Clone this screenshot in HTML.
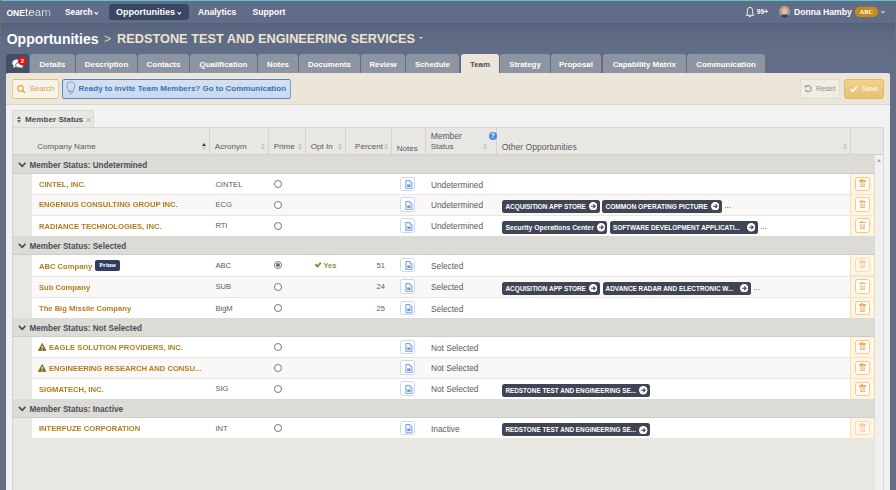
<!DOCTYPE html>
<html><head><meta charset="utf-8">
<style>
*{box-sizing:border-box;margin:0;padding:0}
html,body{width:896px;height:490px;overflow:hidden}
body{position:relative;background:#626e88;font-family:"Liberation Sans",sans-serif;color:#555}
.a{position:absolute}
#topline{left:1px;top:0;width:895px;height:1px;background:#58c8c6}
#nav{left:0;top:1px;width:896px;height:22px;background:#616d88}
#hdr{left:0;top:23px;width:896px;height:467px;background:linear-gradient(#55607a 0px,#5b6680 6px,#616c86 22px,#636e88 50px,#626e88 100px)}
#lstripe{left:0;top:1px;width:1px;height:489px;background:#6b6e74}
#rstripe{left:895px;top:1px;width:1px;height:489px;background:#6b6e74}
.navt{position:absolute;top:1.4px;height:22px;line-height:22px;font-weight:bold;font-size:8.6px;color:#fff;white-space:nowrap}
#opp{left:109px;top:3.6px;width:80px;height:16.2px;background:#3a4762;border-radius:3px}
.title{position:absolute;top:28.8px;font-weight:bold;color:#fff;white-space:nowrap;line-height:20px}
.tab{position:absolute;top:53.5px;height:19.5px;background:#8d95a2;border-radius:3px 3px 0 0;color:#fff;font-weight:bold;font-size:7.9px;text-align:center;line-height:21px;white-space:nowrap}
.tab.act{background:#ebe6d9;color:#4b4f5a}
#panel{left:6px;top:73px;width:884px;height:417px;background:#f2f2f2;border-radius:3px 3px 0 0}
#tool{left:6px;top:73px;width:884px;height:32px;background:#ebe6d9;border-bottom:1px solid #ddd6c6;border-radius:3px 3px 0 0}
.btn{position:absolute;top:79px;height:19.5px;border-radius:2.5px;font-size:8px;line-height:17.5px;white-space:nowrap;border:1px solid}
.chev{display:inline-block;width:2.7px;height:2.7px;border-right:1.1px solid #fff;border-bottom:1.1px solid #fff;transform:rotate(45deg);vertical-align:2px;margin-left:2.6px}

#chip{left:12.1px;top:110.4px;width:82.3px;height:17.5px;background:#e9e7e3;border:1px solid #dad8d2;border-bottom:none;border-radius:2.5px 2.5px 0 0;font-size:8.1px;font-weight:bold;color:#474a55;line-height:17px;padding-left:12px;white-space:nowrap}
#chip .x{position:absolute;left:73px;top:0.2px;color:#bdbbb6;font-size:9px;font-weight:bold}
.sorti{position:absolute;width:5px;height:8px}
.sorti:before,.sorti:after{content:"";position:absolute;left:0;border-left:2.5px solid transparent;border-right:2.5px solid transparent}
.sorti:before{top:0;border-bottom:3px solid #c9c7c2}
.sorti:after{top:4.5px;border-top:3px solid #c9c7c2}
.sorti.up:before{border-bottom-color:#3e3f44}
.sorti.dk:before{border-bottom-color:#67686c}.sorti.dk:after{border-top-color:#67686c}
#thead{left:12px;top:127.2px;width:872px;height:27.8px;background:#e9e7e3;border:1px solid #d9d7d1;border-bottom:1.2px solid #d3d1cb}
.th{position:absolute;font-size:8.1px;color:#565a66;white-space:nowrap;line-height:10px}
.vsep{position:absolute;top:127.2px;width:1px;height:27px;background:#d6d4ce}
#tbody{left:12.3px;top:155px;width:862.4px;height:335px;background:#e9e7e3;border-left:1px solid #d9d7d1}
#sbar{left:874.7px;top:155px;width:9.6px;height:335px;background:#f0f0f0;border-right:1px solid #d9d9d9}
#sup{left:877px;top:159px;border-left:2.5px solid transparent;border-right:2.5px solid transparent;border-bottom:3px solid #a6a6a6}
.grp{position:absolute;left:12.3px;width:862.4px;height:18px;background:#dddbd6;border-bottom:1px solid #cfcdc7;border-left:1px solid #d3d1cb}
.gchev{position:absolute;left:4.6px;top:6.9px;width:8.4px;height:6px}
.row>svg{position:absolute}
.gtxt{position:absolute;left:16.2px;top:1.9px;line-height:17.5px;font-size:8.15px;font-weight:bold;color:#4b4e58;white-space:nowrap}
.row{position:absolute;left:32.2px;width:842.5px;height:21.1px;background:#fff;border-bottom:1px solid #e8e6e1}
.row.alt{background:#f9f8f6}
.row>span{position:absolute}
.cn{left:6.4px;top:0.9px;line-height:20.5px;font-size:8.05px;transform:scaleX(0.945);transform-origin:0 0;font-weight:bold;color:#b27d1f;white-space:nowrap}
.acr,.st,.pct{top:0.6px;line-height:20.5px;font-size:8px;color:#5a5a5a;white-space:nowrap}
.acr{left:183.2px;font-size:7.6px}
.st{left:398.8px;font-size:8.3px}
.pct{right:489.8px;font-size:7.5px}
.radio{left:241.9px;top:6.1px;width:7.9px;height:7.9px;border:0.9px solid #767676;border-radius:50%;background:#fff}
.radio.on:after{content:"";position:absolute;left:1.05px;top:1.05px;width:4px;height:4px;border-radius:50%;background:#6a6a6a}
.yes{left:281.7px;top:0.6px;line-height:20.5px;font-size:7.5px;font-weight:bold;color:#7b9a3b;white-space:nowrap}
.chk{display:inline-block;width:3.6px;height:6.4px;border-right:2.1px solid #7b9a3b;border-bottom:2.1px solid #7b9a3b;transform:rotate(42deg);margin:0 4.2px 0 1.8px;vertical-align:0.5px}
.note{left:368.2px;top:2.5px;width:14.5px;height:14.5px;border:1px solid #c9d8ee;border-radius:2.5px;background:#fff}

.pill{top:5.1px;height:13px;background:#3f4555;border-radius:2.5px}
.pt{position:absolute;left:3px;top:0;line-height:13px;font-size:6.5px;font-weight:bold;color:#fff;white-space:nowrap}
.arr{position:absolute;right:2.4px;top:2.3px;width:8.4px;height:8.4px}
.more{top:12.4px;width:1.2px;height:1.2px;background:#7a7a7a;box-shadow:2.2px 0 0 #7a7a7a,4.4px 0 0 #7a7a7a}
.del{left:818px;top:0;width:24.5px;height:21.1px;background:#fdf4e4;border-left:1px solid #f5dfb6;border-right:1px solid #f5dcaa;border-bottom:1px solid #f6e4c4}
.delb{position:absolute;left:4.1px;top:2.7px;width:14.6px;height:14.6px;border:1.1px solid #f0c98c;border-radius:2.8px;background:#fffdf9}
.trash{position:absolute;left:3.6px;top:4.2px;width:5.2px;height:5.6px;background:linear-gradient(90deg,#f4c4b0,#f8ddd0 50%,#f4c4b0);border-bottom:1px solid #f2bf6c}
.trash:before{content:"";position:absolute;left:-0.9px;top:-1.6px;width:7px;height:1.4px;background:#f0b558}
.trash:after{content:"";position:absolute;left:1.6px;top:-2.6px;width:2px;height:1.2px;background:#f0b558}
.del.dis .delb{opacity:.55}
.warn{left:5.7px;top:6.2px;width:8.4px;height:8px}
.prime{left:62.9px;top:4.9px;width:24.8px;height:10.7px;background:#2f3e5e;border-radius:2px;color:#fff;font-family:"Liberation Serif",serif;font-weight:bold;font-size:6.3px;line-height:10.7px;text-align:center}
</style></head><body>
<div id="hdr" class="a"></div>
<div id="nav" class="a"></div>
<div id="topline" class="a"></div>
<div id="lstripe" class="a"></div>
<div id="rstripe" class="a"></div>
<div id="opp" class="a"></div>
<div class="navt" style="left:6.4px;font-size:8.6px;letter-spacing:0">ONE<span style="font-weight:normal;font-size:11.6px;letter-spacing:0;background:linear-gradient(90deg,#fff,#e4e7ee 50%,#b9bfcc);-webkit-background-clip:text;background-clip:text;color:transparent">team</span></div>
<div class="navt" style="left:65px;font-size:8.3px">Search<span class="chev"></span></div>
<div class="navt" style="left:116px;font-size:9px">Opportunities<span class="chev"></span></div>
<div class="navt" style="left:198px">Analytics</div>
<div class="navt" style="left:252.5px">Support</div>
<div class="navt" style="left:756.8px;font-size:6.6px;top:1.4px">99+</div>
<div class="navt" style="left:794px">Donna Hamby</div>

<div class="title" style="left:6.7px;font-size:14px">Opportunities</div>
<div class="title" style="left:104px;font-weight:normal;color:#d9d3c4;font-size:12px">&gt;</div>
<div class="title" style="left:117px;color:#ede4cf;font-size:12.75px">REDSTONE TEST AND ENGINEERING SERVICES</div>
<div class="a" style="left:419.2px;top:37px;border-left:2px solid transparent;border-right:2px solid transparent;border-top:2.2px solid #ddd6c6"></div>

<div class="tab" style="left:6px;width:23.4px;background:#434f69"></div>
<div class="tab" style="left:30px;width:45px">Details</div>
<div class="tab" style="left:76px;width:61px">Description</div>
<div class="tab" style="left:138px;width:51px">Contacts</div>
<div class="tab" style="left:190px;width:67px">Qualification</div>
<div class="tab" style="left:258px;width:40px">Notes</div>
<div class="tab" style="left:299px;width:61px">Documents</div>
<div class="tab" style="left:361px;width:44px">Review</div>
<div class="tab" style="left:406px;width:53px">Schedule</div>
<div class="tab act" style="left:461px;width:38px">Team</div>
<div class="tab" style="left:500px;width:50px">Strategy</div>
<div class="tab" style="left:551px;width:50px">Proposal</div>
<div class="tab" style="left:602.5px;width:83.5px">Capability Matrix</div>
<div class="tab" style="left:687px;width:78px">Communication</div>

<div id="panel" class="a"></div>
<div id="tool" class="a"></div>
<div class="btn" style="left:12px;width:47px;background:#f6f3ec;border-color:#ebbb68 #f0cf95 #ebbf70 #efcb8c;color:#e09d38;padding-left:16.6px;line-height:18.4px;font-size:7.9px">Search</div>
<div class="btn" style="left:62px;width:229px;background:linear-gradient(#d5e1f2,#cad9ee);border-color:#5283c5 #7ea2d5 #5283c5 #5a89c8;color:#3c70b6;padding-left:15.6px;font-weight:bold;line-height:18.3px;font-size:8px">Ready to invite Team Members? Go to Communication</div>
<div class="btn" style="left:799.6px;width:40.4px;background:#f0ece2;border-color:#e2ddd0;color:#8f8f8f;padding-left:15.5px;font-size:7.3px;line-height:18px">Reset</div>
<div class="btn" style="left:843.75px;width:40px;background:linear-gradient(#f0d28f,#e9c170);border-color:#e2b968;color:#fff;padding-left:17px;font-size:7.3px;line-height:18px">Save</div>


<div id="chip" class="a"><span class="sorti dk" style="left:4.2px;top:4.6px"></span>Member Status<span class="x">×</span></div>
<div id="thead" class="a"></div>
<div class="vsep" style="left:209px"></div>
<div class="vsep" style="left:268px"></div>
<div class="vsep" style="left:305px"></div>
<div class="vsep" style="left:345px"></div>
<div class="vsep" style="left:391px"></div>
<div class="vsep" style="left:425px"></div>
<div class="vsep" style="left:496px"></div>
<div class="vsep" style="left:850px"></div>
<div class="th" style="left:37.2px;top:141.5px">Company Name</div><span class="sorti up" style="left:201.5px;top:142.5px"></span>
<div class="th" style="left:214.8px;top:141.5px">Acronym</div><span class="sorti" style="left:261px;top:142.5px"></span>
<div class="th" style="left:273.7px;top:141.5px">Prime</div><span class="sorti" style="left:297.5px;top:142.5px"></span>
<div class="th" style="left:310.7px;top:141.5px">Opt In</div><span class="sorti" style="left:337.5px;top:142.5px"></span>
<div class="th" style="left:355px;top:141.5px">Percent</div><span class="sorti" style="left:383.5px;top:142.5px"></span>
<div class="th" style="left:396.7px;top:144px">Notes</div>
<div class="th" style="left:430.7px;top:131px;font-size:8.5px">Member</div>
<div class="th" style="left:430.7px;top:141.5px">Status</div><span class="sorti" style="left:483px;top:142.5px"></span>
<span class="a" style="left:488.7px;top:131.8px;width:8px;height:8px;border-radius:50%;background:#4a8ad6;color:#fff;font-size:6.5px;font-weight:bold;line-height:8px;text-align:center">?</span>
<div class="th" style="left:501.7px;top:141.5px;font-size:8.6px">Other Opportunities</div><span class="sorti" style="left:842.5px;top:142.5px"></span>
<div id="tbody" class="a"></div>
<div id="sbar" class="a"></div>
<div id="sup" class="a"></div>

<svg class="a" style="left:0;top:0" width="896" height="110" viewBox="0 0 896 110">
 <!-- chat bubbles -->
 <ellipse cx="16.8" cy="63" rx="4.6" ry="3.6" fill="#fff"/>
 <path d="M14 65.5 L13 68 L16.5 66.2 Z" fill="#fff"/>
 <ellipse cx="19.5" cy="65.2" rx="4" ry="2.6" fill="#fff" stroke="#434f69" stroke-width="0.8"/>
 <path d="M21.5 67 L23.2 68.3 L20 67.5 Z" fill="#fff"/>
 <circle cx="22.3" cy="61" r="4.4" fill="#f01010"/>
 <text x="22.3" y="63.3" font-size="6" font-weight="bold" fill="#fff" text-anchor="middle" font-family="Liberation Sans">2</text>
 <!-- search magnifier -->
 <circle cx="20.5" cy="88.4" r="2.8" fill="none" stroke="#e6a232" stroke-width="1.1"/>
 <path d="M22.3 90.2 L24.6 92.5" stroke="#e6a232" stroke-width="1.5" stroke-linecap="round"/>
 <!-- bulb -->
 <path d="M68.3 91.2 C68.3 88.5 66.9 87.8 66.9 85.6 A3.95 3.95 0 0 1 74.8 85.6 C74.8 87.8 73.4 88.5 73.4 91.2 Z" fill="none" stroke="#6a94cf" stroke-width="0.8"/>
 <path d="M68.5 91.6 H73.2 M69.2 93.4 H72.5" stroke="#6a94cf" stroke-width="0.8"/>
 <!-- reset -->
 <path d="M806.2 86.5 A3 3 0 1 1 805.4 89.8" fill="none" stroke="#8e8e8e" stroke-width="1.1"/>
 <path d="M804.6 85.4 L807.6 85.6 L805.4 88 Z" fill="#8e8e8e"/>
 <!-- save check -->
 <path d="M850.4 89.2 L852.6 91.3 L856.7 86.9" fill="none" stroke="#fff" stroke-width="1.7"/>
 <!-- bell -->
 <path d="M746.2 15.3 C747.6 14 747.4 12.5 747.4 10.5 C747.4 8.6 748.5 7.3 750 7.3 C751.5 7.3 752.6 8.6 752.6 10.5 C752.6 12.5 752.4 14 753.8 15.3 Z" fill="none" stroke="#fff" stroke-width="0.9"/>
 <path d="M749 16.4 H751" stroke="#fff" stroke-width="1"/>
 <!-- avatar -->
 <defs><clipPath id="av"><circle cx="784.7" cy="11.9" r="5.8"/></clipPath></defs>
 <g clip-path="url(#av)">
  <rect x="778" y="5" width="14" height="14" fill="#9c948f"/>
  <ellipse cx="784.4" cy="9.6" rx="4.2" ry="4.4" fill="#c9a06a"/>
  <ellipse cx="784.6" cy="11.6" rx="2.8" ry="3.3" fill="#dfbd9e"/>
  <ellipse cx="784.7" cy="18.2" rx="5.2" ry="3.6" fill="#2b3990"/>
 </g>
 <!-- ABC pill -->
 <rect x="854.8" y="6.8" width="23.3" height="10.2" rx="5.1" fill="#c38a1c"/>
 <text x="866.4" y="14.3" font-size="6.6" font-weight="bold" fill="#fff" text-anchor="middle" font-family="Liberation Serif">ABC</text>
 <path d="M881.2 11 L883 12.8 L884.8 11" fill="none" stroke="#fff" stroke-width="1"/>
</svg>
<div class="grp" style="top:155.00px;height:18.90px"><svg class="gchev" viewBox="0 0 8.4 6"><path d="M0.9 0.9 L4.2 4.3 L7.5 0.9" fill="none" stroke="#48494e" stroke-width="1.6"/></svg><span class="gtxt">Member Status: Undetermined</span></div>
<div class="row" style="top:174.00px;height:20.60px"><span class="cn">CINTEL, INC.</span><span class="acr">CINTEL</span><span class="radio"></span><span class="note"><svg style="position:absolute;left:3.6px;top:2.6px" width="8" height="9.4" viewBox="0 0 8 9.4"><path d="M0.9 0.6 H4.9 L7 2.7 V8.8 H0.9 Z" fill="#fff" stroke="#5a8ed4" stroke-width="0.9"/><path d="M4.8 0.7 V2.8 H6.9" fill="none" stroke="#7da6de" stroke-width="0.7"/><rect x="2.2" y="4.4" width="3.4" height="2.8" fill="#6f9ad8"/></svg></span><span class="st">Undetermined</span><span class="del"><span class="delb"><span class="trash"></span></span></span></div>
<div class="row alt" style="top:194.60px;height:21.20px"><span class="cn">ENGENIUS CONSULTING GROUP INC.</span><span class="acr">ECG</span><span class="radio"></span><span class="note"><svg style="position:absolute;left:3.6px;top:2.6px" width="8" height="9.4" viewBox="0 0 8 9.4"><path d="M0.9 0.6 H4.9 L7 2.7 V8.8 H0.9 Z" fill="#fff" stroke="#5a8ed4" stroke-width="0.9"/><path d="M4.8 0.7 V2.8 H6.9" fill="none" stroke="#7da6de" stroke-width="0.7"/><rect x="2.2" y="4.4" width="3.4" height="2.8" fill="#6f9ad8"/></svg></span><span class="st">Undetermined</span><span class="pill" style="left:470.2px;width:97.3px"><span class="pt" style="font-size:6.43px">ACQUISITION APP STORE</span><svg class="arr" viewBox="0 0 8.4 8.4"><circle cx="4.2" cy="4.2" r="4.2" fill="#fff"/><path d="M1.9 4.2 H6.1 M4.3 2.3 L6.2 4.2 L4.3 6.1" fill="none" stroke="#3f4555" stroke-width="1.1"/></svg></span><span class="pill" style="left:570.2px;width:119.5px"><span class="pt" style="font-size:6.61px">COMMON OPERATING PICTURE</span><svg class="arr" viewBox="0 0 8.4 8.4"><circle cx="4.2" cy="4.2" r="4.2" fill="#fff"/><path d="M1.9 4.2 H6.1 M4.3 2.3 L6.2 4.2 L4.3 6.1" fill="none" stroke="#3f4555" stroke-width="1.1"/></svg></span><span class="more" style="left:692.6px"></span><span class="del"><span class="delb"><span class="trash"></span></span></span></div>
<div class="row" style="top:215.80px;height:20.80px"><span class="cn">RADIANCE TECHNOLOGIES, INC.</span><span class="acr">RTI</span><span class="radio"></span><span class="note"><svg style="position:absolute;left:3.6px;top:2.6px" width="8" height="9.4" viewBox="0 0 8 9.4"><path d="M0.9 0.6 H4.9 L7 2.7 V8.8 H0.9 Z" fill="#fff" stroke="#5a8ed4" stroke-width="0.9"/><path d="M4.8 0.7 V2.8 H6.9" fill="none" stroke="#7da6de" stroke-width="0.7"/><rect x="2.2" y="4.4" width="3.4" height="2.8" fill="#6f9ad8"/></svg></span><span class="st">Undetermined</span><span class="pill" style="left:470.2px;width:105.0px"><span class="pt" style="font-size:6.83px">Security Operations Center</span><svg class="arr" viewBox="0 0 8.4 8.4"><circle cx="4.2" cy="4.2" r="4.2" fill="#fff"/><path d="M1.9 4.2 H6.1 M4.3 2.3 L6.2 4.2 L4.3 6.1" fill="none" stroke="#3f4555" stroke-width="1.1"/></svg></span><span class="pill" style="left:577.8px;width:147.6px"><span class="pt" style="font-size:6.4px">SOFTWARE DEVELOPMENT APPLICATI...</span><svg class="arr" viewBox="0 0 8.4 8.4"><circle cx="4.2" cy="4.2" r="4.2" fill="#fff"/><path d="M1.9 4.2 H6.1 M4.3 2.3 L6.2 4.2 L4.3 6.1" fill="none" stroke="#3f4555" stroke-width="1.1"/></svg></span><span class="more" style="left:729.1px"></span><span class="del"><span class="delb"><span class="trash"></span></span></span></div>
<div class="grp" style="top:236.10px;height:18.80px"><svg class="gchev" viewBox="0 0 8.4 6"><path d="M0.9 0.9 L4.2 4.3 L7.5 0.9" fill="none" stroke="#48494e" stroke-width="1.6"/></svg><span class="gtxt">Member Status: Selected</span></div>
<div class="row" style="top:255.00px;height:21.70px"><span class="cn" style="top:1.5px">ABC Company</span><span class="prime">Prime</span><span class="acr">ABC</span><span class="radio on"></span><span class="yes"><span class="chk"></span>Yes</span><span class="pct">51</span><span class="note"><svg style="position:absolute;left:3.6px;top:2.6px" width="8" height="9.4" viewBox="0 0 8 9.4"><path d="M0.9 0.6 H4.9 L7 2.7 V8.8 H0.9 Z" fill="#fff" stroke="#5a8ed4" stroke-width="0.9"/><path d="M4.8 0.7 V2.8 H6.9" fill="none" stroke="#7da6de" stroke-width="0.7"/><rect x="2.2" y="4.4" width="3.4" height="2.8" fill="#6f9ad8"/></svg></span><span class="st">Selected</span><span class="del dis"><span class="delb"><span class="trash"></span></span></span></div>
<div class="row alt" style="top:276.70px;height:21.40px"><span class="cn">Sub Company</span><span class="acr">SUB</span><span class="radio"></span><span class="pct">24</span><span class="note"><svg style="position:absolute;left:3.6px;top:2.6px" width="8" height="9.4" viewBox="0 0 8 9.4"><path d="M0.9 0.6 H4.9 L7 2.7 V8.8 H0.9 Z" fill="#fff" stroke="#5a8ed4" stroke-width="0.9"/><path d="M4.8 0.7 V2.8 H6.9" fill="none" stroke="#7da6de" stroke-width="0.7"/><rect x="2.2" y="4.4" width="3.4" height="2.8" fill="#6f9ad8"/></svg></span><span class="st">Selected</span><span class="pill" style="left:470.2px;width:97.3px"><span class="pt" style="font-size:6.43px">ACQUISITION APP STORE</span><svg class="arr" viewBox="0 0 8.4 8.4"><circle cx="4.2" cy="4.2" r="4.2" fill="#fff"/><path d="M1.9 4.2 H6.1 M4.3 2.3 L6.2 4.2 L4.3 6.1" fill="none" stroke="#3f4555" stroke-width="1.1"/></svg></span><span class="pill" style="left:570.4px;width:148.0px"><span class="pt" style="font-size:6.42px">ADVANCE RADAR AND ELECTRONIC W...</span><svg class="arr" viewBox="0 0 8.4 8.4"><circle cx="4.2" cy="4.2" r="4.2" fill="#fff"/><path d="M1.9 4.2 H6.1 M4.3 2.3 L6.2 4.2 L4.3 6.1" fill="none" stroke="#3f4555" stroke-width="1.1"/></svg></span><span class="more" style="left:721.5px"></span><span class="del"><span class="delb"><span class="trash"></span></span></span></div>
<div class="row" style="top:298.10px;height:20.70px"><span class="cn">The Big Missile Company</span><span class="acr">BigM</span><span class="radio"></span><span class="pct">25</span><span class="note"><svg style="position:absolute;left:3.6px;top:2.6px" width="8" height="9.4" viewBox="0 0 8 9.4"><path d="M0.9 0.6 H4.9 L7 2.7 V8.8 H0.9 Z" fill="#fff" stroke="#5a8ed4" stroke-width="0.9"/><path d="M4.8 0.7 V2.8 H6.9" fill="none" stroke="#7da6de" stroke-width="0.7"/><rect x="2.2" y="4.4" width="3.4" height="2.8" fill="#6f9ad8"/></svg></span><span class="st">Selected</span><span class="del"><span class="delb"><span class="trash"></span></span></span></div>
<div class="grp" style="top:318.30px;height:18.60px"><svg class="gchev" viewBox="0 0 8.4 6"><path d="M0.9 0.9 L4.2 4.3 L7.5 0.9" fill="none" stroke="#48494e" stroke-width="1.6"/></svg><span class="gtxt">Member Status: Not Selected</span></div>
<div class="row" style="top:337.00px;height:20.90px"><svg class="warn" viewBox="0 0 8.4 8"><path d="M4.2 0.3 L8.3 7.8 H0.1 Z" fill="#7a6b14" stroke="#7a6b14" stroke-width="0.5" stroke-linejoin="round"/><path d="M4.2 2.8 V5.3 M4.2 6.1 V6.9" stroke="#fff" stroke-width="1.1"/></svg><span class="cn" style="left:17.1px">EAGLE SOLUTION PROVIDERS, INC.</span><span class="radio"></span><span class="note"><svg style="position:absolute;left:3.6px;top:2.6px" width="8" height="9.4" viewBox="0 0 8 9.4"><path d="M0.9 0.6 H4.9 L7 2.7 V8.8 H0.9 Z" fill="#fff" stroke="#5a8ed4" stroke-width="0.9"/><path d="M4.8 0.7 V2.8 H6.9" fill="none" stroke="#7da6de" stroke-width="0.7"/><rect x="2.2" y="4.4" width="3.4" height="2.8" fill="#6f9ad8"/></svg></span><span class="st">Not Selected</span><span class="del"><span class="delb"><span class="trash"></span></span></span></div>
<div class="row alt" style="top:357.90px;height:21.00px"><svg class="warn" viewBox="0 0 8.4 8"><path d="M4.2 0.3 L8.3 7.8 H0.1 Z" fill="#7a6b14" stroke="#7a6b14" stroke-width="0.5" stroke-linejoin="round"/><path d="M4.2 2.8 V5.3 M4.2 6.1 V6.9" stroke="#fff" stroke-width="1.1"/></svg><span class="cn" style="left:17.1px">ENGINEERING RESEARCH AND CONSU...</span><span class="radio"></span><span class="note"><svg style="position:absolute;left:3.6px;top:2.6px" width="8" height="9.4" viewBox="0 0 8 9.4"><path d="M0.9 0.6 H4.9 L7 2.7 V8.8 H0.9 Z" fill="#fff" stroke="#5a8ed4" stroke-width="0.9"/><path d="M4.8 0.7 V2.8 H6.9" fill="none" stroke="#7da6de" stroke-width="0.7"/><rect x="2.2" y="4.4" width="3.4" height="2.8" fill="#6f9ad8"/></svg></span><span class="st">Not Selected</span><span class="del"><span class="delb"><span class="trash"></span></span></span></div>
<div class="row" style="top:378.90px;height:20.70px"><span class="cn">SIGMATECH, INC.</span><span class="acr">SIG</span><span class="radio"></span><span class="note"><svg style="position:absolute;left:3.6px;top:2.6px" width="8" height="9.4" viewBox="0 0 8 9.4"><path d="M0.9 0.6 H4.9 L7 2.7 V8.8 H0.9 Z" fill="#fff" stroke="#5a8ed4" stroke-width="0.9"/><path d="M4.8 0.7 V2.8 H6.9" fill="none" stroke="#7da6de" stroke-width="0.7"/><rect x="2.2" y="4.4" width="3.4" height="2.8" fill="#6f9ad8"/></svg></span><span class="st">Not Selected</span><span class="pill" style="left:470.2px;width:147.8px"><span class="pt" style="font-size:6.38px">REDSTONE TEST AND ENGINEERING SE...</span><svg class="arr" viewBox="0 0 8.4 8.4"><circle cx="4.2" cy="4.2" r="4.2" fill="#fff"/><path d="M1.9 4.2 H6.1 M4.3 2.3 L6.2 4.2 L4.3 6.1" fill="none" stroke="#3f4555" stroke-width="1.1"/></svg></span><span class="del"><span class="delb"><span class="trash"></span></span></span></div>
<div class="grp" style="top:399.10px;height:19.00px"><svg class="gchev" viewBox="0 0 8.4 6"><path d="M0.9 0.9 L4.2 4.3 L7.5 0.9" fill="none" stroke="#48494e" stroke-width="1.6"/></svg><span class="gtxt">Member Status: Inactive</span></div>
<div class="row" style="top:418.20px;height:20.90px"><span class="cn">INTERFUZE CORPORATION</span><span class="acr">INT</span><span class="radio"></span><span class="note"><svg style="position:absolute;left:3.6px;top:2.6px" width="8" height="9.4" viewBox="0 0 8 9.4"><path d="M0.9 0.6 H4.9 L7 2.7 V8.8 H0.9 Z" fill="#fff" stroke="#5a8ed4" stroke-width="0.9"/><path d="M4.8 0.7 V2.8 H6.9" fill="none" stroke="#7da6de" stroke-width="0.7"/><rect x="2.2" y="4.4" width="3.4" height="2.8" fill="#6f9ad8"/></svg></span><span class="st">Inactive</span><span class="pill" style="left:470.2px;width:147.8px"><span class="pt" style="font-size:6.38px">REDSTONE TEST AND ENGINEERING SE...</span><svg class="arr" viewBox="0 0 8.4 8.4"><circle cx="4.2" cy="4.2" r="4.2" fill="#fff"/><path d="M1.9 4.2 H6.1 M4.3 2.3 L6.2 4.2 L4.3 6.1" fill="none" stroke="#3f4555" stroke-width="1.1"/></svg></span><span class="del dis"><span class="delb"><span class="trash"></span></span></span></div>


</body></html>
